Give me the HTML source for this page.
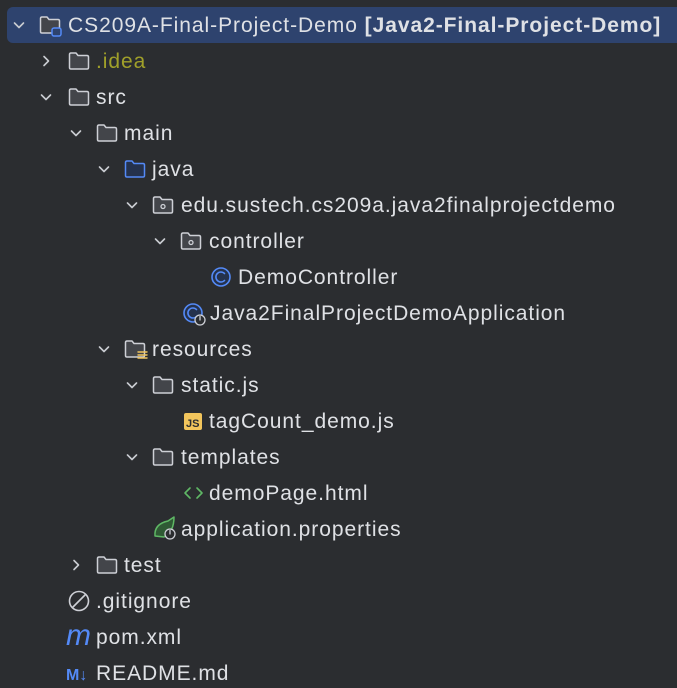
<!DOCTYPE html>
<html><head><meta charset="utf-8"><style>
html,body{margin:0;padding:0;background:#2b2d30;width:677px;height:688px;overflow:hidden}
body{position:relative;font-family:"Liberation Sans",sans-serif;font-size:21px;color:#dfe1e5}
.sel{position:absolute;left:7px;top:7px;width:680px;height:36px;background:#2e436e;border-radius:6px}
.r{position:absolute;height:36px;line-height:38px;white-space:nowrap;letter-spacing:0.95px}
svg{position:absolute}
</style></head><body>
<div class="sel"></div>
<svg width="677" height="688" style="left:0;top:0" fill="none" stroke-linecap="round" stroke-linejoin="round">
<defs>
<g id="dn"><path d="M-4.5 -2 L0 2.5 L4.5 -2" stroke="#c9ccd1" stroke-width="1.6"/></g>
<g id="rt"><path d="M-2 -4.5 L2.5 0 L-2 4.5" stroke="#c9ccd1" stroke-width="1.6"/></g>
<g id="fd"><path d="M-9.5 -6.5 Q-9.5 -8 -8 -8 L-3 -8 L-1 -5.5 L8 -5.5 Q9.5 -5.5 9.5 -4 L9.5 6.5 Q9.5 8 8 8 L-8 8 Q-9.5 8 -9.5 6.5 Z" fill="#43454a" stroke="#ced0d6" stroke-width="1.5"/></g>
<g id="fb"><path d="M-9.5 -6.5 Q-9.5 -8 -8 -8 L-3 -8 L-1 -5.5 L8 -5.5 Q9.5 -5.5 9.5 -4 L9.5 6.5 Q9.5 8 8 8 L-8 8 Q-9.5 8 -9.5 6.5 Z" fill="#25324d" stroke="#548af7" stroke-width="1.5"/></g>
<g id="fp"><use href="#fd"/><circle cx="0" cy="1.5" r="2" stroke="#ced0d6" stroke-width="1.3"/></g>
</defs>
<use href="#dn" x="19" y="25"/>
<use href="#rt" x="46" y="61"/>
<use href="#dn" x="46" y="97"/>
<use href="#dn" x="76" y="133"/>
<use href="#dn" x="104" y="169"/>
<use href="#dn" x="132" y="205"/>
<use href="#dn" x="160" y="241"/>
<use href="#dn" x="104" y="349"/>
<use href="#dn" x="132" y="385"/>
<use href="#dn" x="132" y="457"/>
<use href="#rt" x="76" y="565"/>
<use href="#fd" x="50" y="25"/>
<rect x="52" y="28" width="9" height="8" rx="2" fill="#2e436e" stroke="#548af7" stroke-width="1.5"/>
<use href="#fd" x="79" y="61"/>
<use href="#fd" x="79" y="97"/>
<use href="#fd" x="107" y="133"/>
<use href="#fb" x="135" y="169"/>
<use href="#fp" x="163" y="205"/>
<use href="#fp" x="191" y="241"/>
<circle cx="221" cy="277" r="9" stroke="#548af7" stroke-width="1.6" fill="#25324d"/>
<path d="M224.5 273.5 A5 5 0 1 0 224.5 280.5" stroke="#548af7" stroke-width="1.6"/>
<circle cx="193" cy="313" r="9" stroke="#548af7" stroke-width="1.6" fill="#25324d"/>
<path d="M196.5 309.5 A5 5 0 1 0 196.5 316.5" stroke="#548af7" stroke-width="1.6"/>
<circle cx="200" cy="320" r="5" fill="#2b2d30" stroke="#ced0d6" stroke-width="1.3"/>
<path d="M200 316.5 V320" stroke="#ced0d6" stroke-width="1.3"/>
<use href="#fd" x="135" y="349"/>
<path d="M138 352 H147 M138 355 H147 M138 358 H147" stroke="#f2c55c" stroke-width="1.4"/>
<use href="#fd" x="163" y="385"/>
<rect x="184" y="413" width="18" height="17" rx="2" fill="#f2c55c" stroke="none"/>
<text x="186" y="427" font-family="Liberation Sans" font-size="11" font-weight="bold" fill="#2b2d30">JS</text>
<use href="#fd" x="163" y="457"/>
<path d="M190 488 L185 493 L190 498 M197 488 L202 493 L197 498" stroke="#5fb865" stroke-width="1.6"/>
<path d="M155 536 Q154 524 168 521 L174 517 Q174 532 164 537 Z" fill="#2f5a34" stroke="#5fb865" stroke-width="1.5"/>
<circle cx="170" cy="534" r="5" fill="#2b2d30" stroke="#ced0d6" stroke-width="1.3"/>
<path d="M170 530.5 V534" stroke="#ced0d6" stroke-width="1.3"/>
<use href="#fd" x="107" y="565"/>
<circle cx="79" cy="601" r="9.5" stroke="#ced0d6" stroke-width="1.6"/>
<path d="M73 607 L85 595" stroke="#ced0d6" stroke-width="1.6"/>
<text x="66" y="645" font-family="Liberation Sans" font-style="italic" font-size="30" fill="#548af7">m</text>
<text x="66" y="680" font-family="Liberation Sans" font-weight="bold" font-size="16" fill="#548af7">M↓</text>
</svg>
<div class="r" style="top:7px;left:68px"><span>CS209A-Final-Project-Demo </span><b>[Java2-Final-Project-Demo]</b></div>
<div class="r" style="top:43px;left:96px;color:#a0a02a">.idea</div>
<div class="r" style="top:79px;left:96px">src</div>
<div class="r" style="top:115px;left:124px">main</div>
<div class="r" style="top:151px;left:152px">java</div>
<div class="r" style="top:187px;left:181px">edu.sustech.cs209a.java2finalprojectdemo</div>
<div class="r" style="top:223px;left:209px">controller</div>
<div class="r" style="top:259px;left:238px">DemoController</div>
<div class="r" style="top:295px;left:210px">Java2FinalProjectDemoApplication</div>
<div class="r" style="top:331px;left:152px">resources</div>
<div class="r" style="top:367px;left:181px">static.js</div>
<div class="r" style="top:403px;left:209px">tagCount_demo.js</div>
<div class="r" style="top:439px;left:181px">templates</div>
<div class="r" style="top:475px;left:209px">demoPage.html</div>
<div class="r" style="top:511px;left:181px">application.properties</div>
<div class="r" style="top:547px;left:124px">test</div>
<div class="r" style="top:583px;left:96px">.gitignore</div>
<div class="r" style="top:619px;left:96px">pom.xml</div>
<div class="r" style="top:655px;left:96px">README.md</div>
</body></html>
